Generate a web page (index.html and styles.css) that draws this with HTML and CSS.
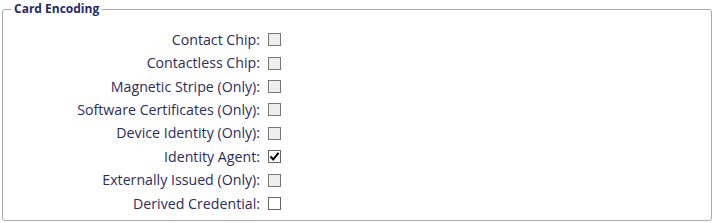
FILE: index.html
```html
<!DOCTYPE html>
<html>
<head>
<meta charset="utf-8">
<link rel="stylesheet" href="styles.css">
</head>
<body>
<fieldset class="group">
  <legend class="group-title">Card Encoding</legend>
  <div class="rows">
    <label class="lbl">Contact Chip:</label><span class="cb disabled"></span>
    <label class="lbl">Contactless Chip:</label><span class="cb disabled"></span>
    <label class="lbl">Magnetic Stripe (Only):</label><span class="cb disabled"></span>
    <label class="lbl">Software Certificates (Only):</label><span class="cb disabled"></span>
    <label class="lbl">Device Identity (Only):</label><span class="cb disabled"></span>
    <label class="lbl">Identity Agent:</label><span class="cb checked"><svg viewBox="0 0 13 13" width="13" height="13"><path d="M2.5 6.5 L5.2 9.5 L10.5 2.8" fill="none" stroke="#000" stroke-width="2"/></svg></span>
    <label class="lbl">Externally Issued (Only):</label><span class="cb disabled"></span>
    <label class="lbl">Derived Credential:</label><span class="cb"></span>
  </div>
</fieldset>
</body>
</html>
```
FILE: styles.css
```css
html, body { margin: 0; padding: 0; background: #fff; }
body { font-family: "Open Sans", "Noto Sans", sans-serif; font-size: 14.2px; color: #2c2c5c; }
.group {
  margin: 1px 4px 0 2px;
  padding: 0 0 5px 0;
  box-sizing: border-box;
  border: 1px solid #a8a8a8;
  border-radius: 3px;
}
.group-title {
  font-weight: bold;
  font-size: 12px;
  line-height: 16px;
  color: #1f2a66;
  padding: 0 3px;
  margin-left: 8px;
}
.rows {
  display: grid;
  grid-template-columns: 257px 13px;
  grid-auto-rows: 23.43px;
  column-gap: 8px;
  align-items: center;
  padding-top: 11px;
}
.lbl { text-align: right; line-height: 16px; }
.cb {
  width: 13px; height: 13px; box-sizing: border-box;
  border: 1px solid #666; background: #fff; display: block;
}
.cb.disabled { background: #eee; border-color: #777; }
.cb svg { display: block; margin: -1px; }
```
